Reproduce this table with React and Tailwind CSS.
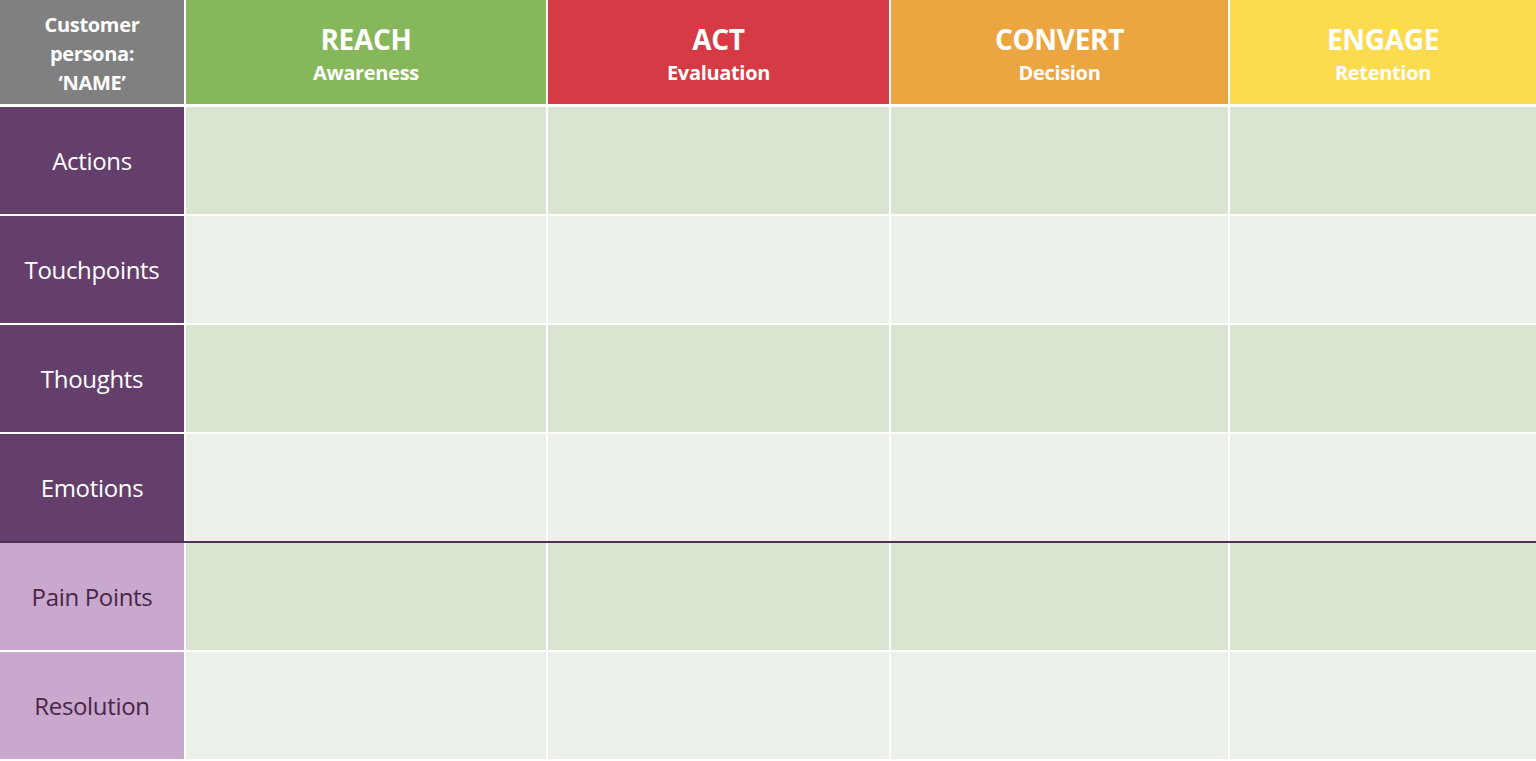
import React from 'react';

const stages = [
  { title: 'REACH', sub: 'Awareness', bg: 'bg-[#86b75a]' },
  { title: 'ACT', sub: 'Evaluation', bg: 'bg-[#d63a44]' },
  { title: 'CONVERT', sub: 'Decision', bg: 'bg-[#eba641]' },
  { title: 'ENGAGE', sub: 'Retention', bg: 'bg-[#fcdc4e]' },
];

const topRows = ['Actions', 'Touchpoints', 'Thoughts', 'Emotions'];
const bottomRows = ['Pain Points', 'Resolution'];

const cols = 'grid grid-cols-[184px_360px_341px_337px_306px] gap-x-[2px]';

function Row({ label, index, light }) {
  // alternate row tint: even rows darker green, odd rows lighter
  const fill = index % 2 === 0 ? 'bg-[#d9e5d1]' : 'bg-[#ebf1e8]';
  return (
    <div className={`${cols} h-[107px]`}>
      <div
        className={`flex items-center justify-center text-[24px] ${
          light ? 'bg-[#c8a8cd] text-[#4a2548]' : 'bg-[#653f6b] text-white'
        }`}
      >
        {label}
      </div>
      {stages.map((s) => (
        <div key={s.title} className={fill} />
      ))}
    </div>
  );
}

export default function App() {
  return (
    <div className="w-[1536px] h-[761px] bg-white overflow-hidden font-['Open_Sans',sans-serif] tracking-[-0.02em]">
      {/* HEADER */}
      <div className={`${cols} h-[104px]`}>
        <div className="bg-[#808080] flex items-center justify-center text-center text-white font-bold text-[20px] leading-[29px] pt-[2px]">
          <div>
            Customer
            <br />
            persona:
            <br />
            ‘NAME’
          </div>
        </div>
        {stages.map((s) => (
          <div key={s.title} className={`${s.bg} flex flex-col items-center justify-center text-white font-bold pt-[8px]`}>
            <span className="text-[28px] leading-[34px]">{s.title}</span>
            <span className="text-[20px] leading-[34px]">{s.sub}</span>
          </div>
        ))}
      </div>

      {/* BODY */}
      <div className="mt-[3px] flex flex-col gap-y-[2px]">
        {topRows.map((r, i) => (
          <Row key={r} label={r} index={i} />
        ))}
      </div>
      <div className="h-[2px] bg-[#4f2f53]" />
      <div className="flex flex-col gap-y-[2px]">
        {bottomRows.map((r, i) => (
          <Row key={r} label={r} index={i} light />
        ))}
      </div>
    </div>
  );
}
